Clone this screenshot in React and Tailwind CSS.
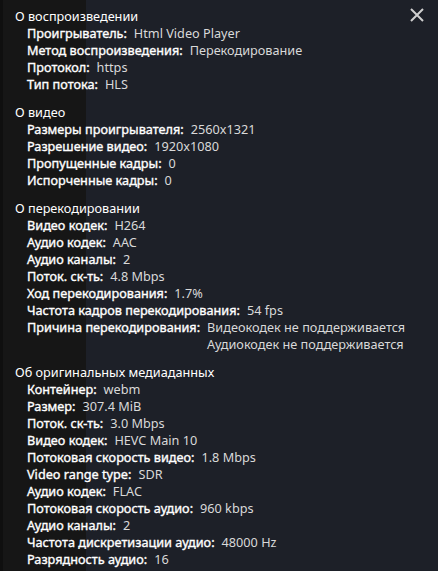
import React from 'react';

const sections = [
  {
    title: 'О воспроизведении',
    items: [
      ['Проигрыватель:', 'Html Video Player'],
      ['Метод воспроизведения:', 'Перекодирование'],
      ['Протокол:', 'https'],
      ['Тип потока:', 'HLS'],
    ],
  },
  {
    title: 'О видео',
    items: [
      ['Размеры проигрывателя:', '2560x1321'],
      ['Разрешение видео:', '1920x1080'],
      ['Пропущенные кадры:', '0'],
      ['Испорченные кадры:', '0'],
    ],
  },
  {
    title: 'О перекодировании',
    items: [
      ['Видео кодек:', 'H264'],
      ['Аудио кодек:', 'AAC'],
      ['Аудио каналы:', '2'],
      ['Поток. ск-ть:', '4.8 Mbps'],
      ['Ход перекодирования:', '1.7%'],
      ['Частота кадров перекодирования:', '54 fps'],
      ['Причина перекодирования:', 'Видеокодек не поддерживается\nАудиокодек не поддерживается'],
    ],
  },
  {
    title: 'Об оригинальных медиаданных',
    items: [
      ['Контейнер:', 'webm'],
      ['Размер:', '307.4 MiB'],
      ['Поток. ск-ть:', '3.0 Mbps'],
      ['Видео кодек:', 'HEVC Main 10'],
      ['Потоковая скорость видео:', '1.8 Mbps'],
      ['Video range type:', 'SDR'],
      ['Аудио кодек:', 'FLAC'],
      ['Потоковая скорость аудио:', '960 kbps'],
      ['Аудио каналы:', '2'],
      ['Частота дискретизации аудио:', '48000 Hz'],
      ['Разрядность аудио:', '16'],
    ],
  },
];

const Stat = ({ label, value }) => (
  <div className="flex items-start">
    <span className="text-white mr-[7px] whitespace-nowrap [-webkit-text-stroke:0.35px_#ffffff]">{label}</span>
    <span className="flex flex-col text-[#d9d9d9]">
      {value.split('\n').map((line) => (
        <span key={line}>{line}</span>
      ))}
    </span>
  </div>
);

const App = () => {
  return (
    <main className="relative w-[438px] h-[571px] overflow-hidden bg-[linear-gradient(to_right,#0f0f0f_0px,#0f0f0f_3px,#161616_3px,#161616_86px,#1d2028_86px)] font-['Noto_Sans',sans-serif] text-[12.7px] leading-[17px] text-white">
      <button className="absolute right-[13px] top-[7px] text-[#cfcfcf]">
        <svg width="16" height="16" viewBox="0 0 16 16" fill="none" stroke="currentColor" strokeWidth="2">
          <path d="M2 2L14 14M14 2L2 14" />
        </svg>
      </button>
      <div className="flex flex-col gap-[11px] pl-[15px] pt-[8px]">
        {sections.map((s) => (
          <section key={s.title} className="flex flex-col">
            <p>{s.title}</p>
            <div className="flex flex-col pl-[12px]">
              {s.items.map(([label, value]) => (
                <Stat key={label + value} label={label} value={value} />
              ))}
            </div>
          </section>
        ))}
      </div>
    </main>
  );
};

export default App;
